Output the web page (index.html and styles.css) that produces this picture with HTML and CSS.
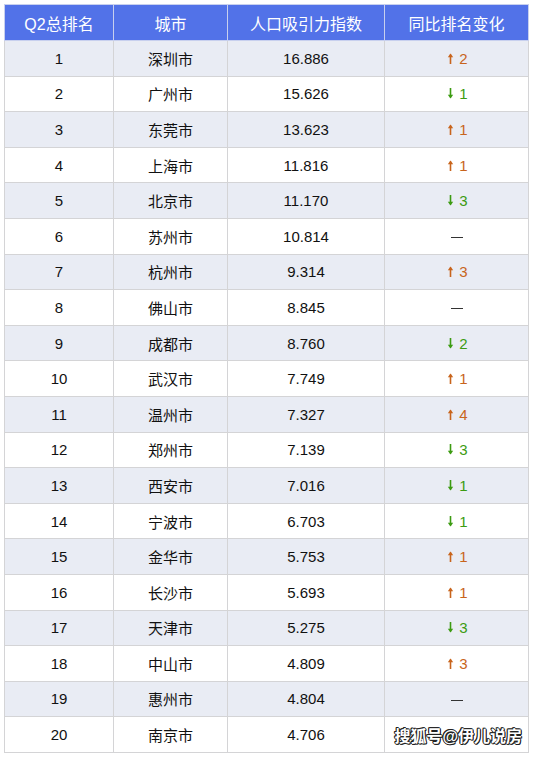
FILE: index.html
```html
<!DOCTYPE html>
<html lang="zh">
<head>
<meta charset="utf-8">
<link rel="stylesheet" href="styles.css">
</head>
<body>
<div class="wrap">
<table class="rank">
<colgroup><col class="c1"><col class="c2"><col class="c3"><col class="c4"></colgroup>
<thead><tr><th>Q2总排名</th><th>城市</th><th>人口吸引力指数</th><th>同比排名变化</th></tr></thead>
<tbody>
<tr><td>1</td><td>深圳市</td><td>16.886</td><td><span class="up"><svg class="arr" viewBox="0 0 7 11"><path d="M3.5 1.5V11" stroke="currentColor" stroke-width="1.6"/><path d="M0.8 4.2L3.5 0.5L6.2 4.2Z" fill="currentColor"/></svg>2</span></td></tr>
<tr><td>2</td><td>广州市</td><td>15.626</td><td><span class="down"><svg class="arr" viewBox="0 0 7 11"><path d="M3.5 0V9.5" stroke="currentColor" stroke-width="1.6"/><path d="M0.8 6.8L3.5 10.5L6.2 6.8Z" fill="currentColor"/></svg>1</span></td></tr>
<tr><td>3</td><td>东莞市</td><td>13.623</td><td><span class="up"><svg class="arr" viewBox="0 0 7 11"><path d="M3.5 1.5V11" stroke="currentColor" stroke-width="1.6"/><path d="M0.8 4.2L3.5 0.5L6.2 4.2Z" fill="currentColor"/></svg>1</span></td></tr>
<tr><td>4</td><td>上海市</td><td>11.816</td><td><span class="up"><svg class="arr" viewBox="0 0 7 11"><path d="M3.5 1.5V11" stroke="currentColor" stroke-width="1.6"/><path d="M0.8 4.2L3.5 0.5L6.2 4.2Z" fill="currentColor"/></svg>1</span></td></tr>
<tr><td>5</td><td>北京市</td><td>11.170</td><td><span class="down"><svg class="arr" viewBox="0 0 7 11"><path d="M3.5 0V9.5" stroke="currentColor" stroke-width="1.6"/><path d="M0.8 6.8L3.5 10.5L6.2 6.8Z" fill="currentColor"/></svg>3</span></td></tr>
<tr><td>6</td><td>苏州市</td><td>10.814</td><td><span class="same"></span></td></tr>
<tr><td>7</td><td>杭州市</td><td>9.314</td><td><span class="up"><svg class="arr" viewBox="0 0 7 11"><path d="M3.5 1.5V11" stroke="currentColor" stroke-width="1.6"/><path d="M0.8 4.2L3.5 0.5L6.2 4.2Z" fill="currentColor"/></svg>3</span></td></tr>
<tr><td>8</td><td>佛山市</td><td>8.845</td><td><span class="same"></span></td></tr>
<tr><td>9</td><td>成都市</td><td>8.760</td><td><span class="down"><svg class="arr" viewBox="0 0 7 11"><path d="M3.5 0V9.5" stroke="currentColor" stroke-width="1.6"/><path d="M0.8 6.8L3.5 10.5L6.2 6.8Z" fill="currentColor"/></svg>2</span></td></tr>
<tr><td>10</td><td>武汉市</td><td>7.749</td><td><span class="up"><svg class="arr" viewBox="0 0 7 11"><path d="M3.5 1.5V11" stroke="currentColor" stroke-width="1.6"/><path d="M0.8 4.2L3.5 0.5L6.2 4.2Z" fill="currentColor"/></svg>1</span></td></tr>
<tr><td>11</td><td>温州市</td><td>7.327</td><td><span class="up"><svg class="arr" viewBox="0 0 7 11"><path d="M3.5 1.5V11" stroke="currentColor" stroke-width="1.6"/><path d="M0.8 4.2L3.5 0.5L6.2 4.2Z" fill="currentColor"/></svg>4</span></td></tr>
<tr><td>12</td><td>郑州市</td><td>7.139</td><td><span class="down"><svg class="arr" viewBox="0 0 7 11"><path d="M3.5 0V9.5" stroke="currentColor" stroke-width="1.6"/><path d="M0.8 6.8L3.5 10.5L6.2 6.8Z" fill="currentColor"/></svg>3</span></td></tr>
<tr><td>13</td><td>西安市</td><td>7.016</td><td><span class="down"><svg class="arr" viewBox="0 0 7 11"><path d="M3.5 0V9.5" stroke="currentColor" stroke-width="1.6"/><path d="M0.8 6.8L3.5 10.5L6.2 6.8Z" fill="currentColor"/></svg>1</span></td></tr>
<tr><td>14</td><td>宁波市</td><td>6.703</td><td><span class="down"><svg class="arr" viewBox="0 0 7 11"><path d="M3.5 0V9.5" stroke="currentColor" stroke-width="1.6"/><path d="M0.8 6.8L3.5 10.5L6.2 6.8Z" fill="currentColor"/></svg>1</span></td></tr>
<tr><td>15</td><td>金华市</td><td>5.753</td><td><span class="up"><svg class="arr" viewBox="0 0 7 11"><path d="M3.5 1.5V11" stroke="currentColor" stroke-width="1.6"/><path d="M0.8 4.2L3.5 0.5L6.2 4.2Z" fill="currentColor"/></svg>1</span></td></tr>
<tr><td>16</td><td>长沙市</td><td>5.693</td><td><span class="up"><svg class="arr" viewBox="0 0 7 11"><path d="M3.5 1.5V11" stroke="currentColor" stroke-width="1.6"/><path d="M0.8 4.2L3.5 0.5L6.2 4.2Z" fill="currentColor"/></svg>1</span></td></tr>
<tr><td>17</td><td>天津市</td><td>5.275</td><td><span class="down"><svg class="arr" viewBox="0 0 7 11"><path d="M3.5 0V9.5" stroke="currentColor" stroke-width="1.6"/><path d="M0.8 6.8L3.5 10.5L6.2 6.8Z" fill="currentColor"/></svg>3</span></td></tr>
<tr><td>18</td><td>中山市</td><td>4.809</td><td><span class="up"><svg class="arr" viewBox="0 0 7 11"><path d="M3.5 1.5V11" stroke="currentColor" stroke-width="1.6"/><path d="M0.8 4.2L3.5 0.5L6.2 4.2Z" fill="currentColor"/></svg>3</span></td></tr>
<tr><td>19</td><td>惠州市</td><td>4.804</td><td><span class="same"></span></td></tr>
<tr><td>20</td><td>南京市</td><td>4.706</td><td><span class="down"><svg class="arr" viewBox="0 0 7 11"><path d="M3.5 0V9.5" stroke="currentColor" stroke-width="1.6"/><path d="M0.8 6.8L3.5 10.5L6.2 6.8Z" fill="currentColor"/></svg>2</span></td></tr>
</tbody>
</table>
<div class="mark">搜狐号@伊儿说房</div>
</div>
</body>
</html>
```
FILE: styles.css
```css
html, body { margin: 0; padding: 0; background: #fff; }
body { font-family: "Liberation Sans", "Noto Sans CJK SC", sans-serif; color: #111; }
.wrap { position: relative; padding: 4px 0 0 4px; width: 524px; }
.rank { border-collapse: collapse; width: 524px; table-layout: fixed; }
.c1 { width: 109px; } .c2 { width: 114px; } .c3 { width: 157px; } .c4 { width: 144px; }
.rank th, .rank td { border: 1px solid #d4d4d6; text-align: center; padding: 0; }
.rank th { background: #5272e8; color: #fff; font-weight: normal; font-size: 16px; height: 35px; border-color: #c8d0ee; }
.rank td { font-size: 15px; height: 34.6px; }
.rank tbody tr:nth-child(odd) td { background: #e9ecf4; }
.up, .down { display: inline-flex; align-items: center; gap: 5px; margin-left: 2px; }
.up { color: #c8641c; }
.down { color: #3c9b12; }
.arr { width: 7px; height: 11px; display: block; }
.same { display: inline-block; width: 12px; height: 1px; background: #333; vertical-align: middle; }
.mark { position: absolute; right: 6px; bottom: 6px; font-size: 16px; font-weight: bold; color: #fff; text-shadow: 1px 0 0 #222, -1px 0 0 #222, 0 1px 0 #222, 0 -1px 0 #222, 1px 1px 0 #222, -1px -1px 0 #222; }
```
